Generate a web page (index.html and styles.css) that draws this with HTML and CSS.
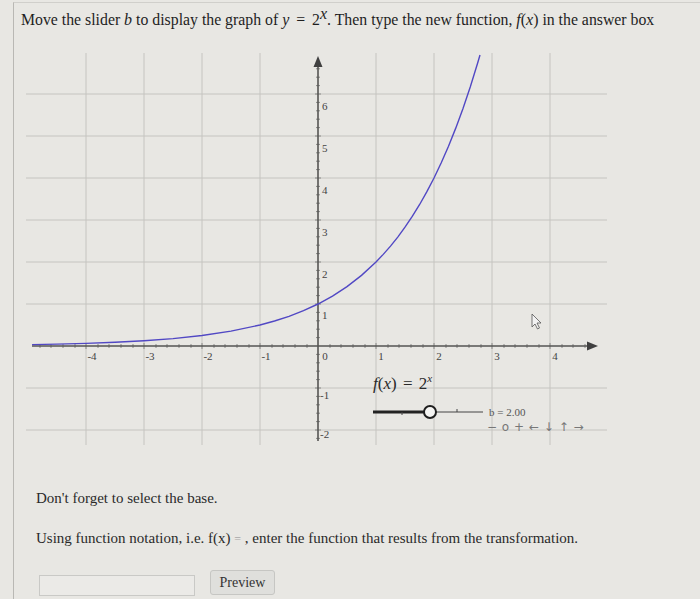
FILE: index.html
```html
<!DOCTYPE html>
<html>
<head>
<meta charset="utf-8">
<link rel="stylesheet" href="styles.css">
</head>
<body>
<div class="panel">
  <p class="title">Move the slider <i class="m">b</i> to display the graph of <i class="m">y</i> <span class="eq">=</span> 2<sup><i class="m">x</i></sup>. Then type the new function, <i class="m">f</i>(<i class="m">x</i>) in the answer box</p>

  <svg class="graph" width="626" height="410" viewBox="14 45 626 410" xmlns="http://www.w3.org/2000/svg">
    <g class="grid">
      <line x1="86" y1="53" x2="86" y2="445"/>
      <line x1="144" y1="53" x2="144" y2="445"/>
      <line x1="202" y1="53" x2="202" y2="445"/>
      <line x1="260" y1="53" x2="260" y2="445"/>
      <line x1="376" y1="53" x2="376" y2="445"/>
      <line x1="434" y1="53" x2="434" y2="445"/>
      <line x1="492" y1="53" x2="492" y2="445"/>
      <line x1="550" y1="53" x2="550" y2="445"/>
      <line x1="26" y1="94" x2="607" y2="94"/>
      <line x1="26" y1="136" x2="607" y2="136"/>
      <line x1="26" y1="178" x2="607" y2="178"/>
      <line x1="26" y1="220" x2="607" y2="220"/>
      <line x1="26" y1="262" x2="607" y2="262"/>
      <line x1="26" y1="304" x2="607" y2="304"/>
      <line x1="26" y1="388" x2="607" y2="388"/>
      <line x1="26" y1="430" x2="607" y2="430"/>
    </g>
    <g class="minor">
      <path d="M40 344v4M51 344v4M63 344v4M75 344v4M98 344v4M109 344v4M121 344v4M133 344v4M156 344v4M167 344v4M179 344v4M191 344v4M214 344v4M225 344v4M237 344v4M249 344v4M272 344v4M283 344v4M295 344v4M307 344v4M330 344v4M341 344v4M353 344v4M365 344v4M388 344v4M399 344v4M411 344v4M423 344v4M446 344v4M457 344v4M469 344v4M481 344v4M504 344v4M515 344v4M527 344v4M539 344v4M562 344v4M573 344v4M585 344v4"/>
      <path d="M316 85.6h4M316 77.2h4M316 68.8h4M316 127.6h4M316 119.2h4M316 110.8h4M316 102.4h4M316 169.6h4M316 161.2h4M316 152.8h4M316 144.4h4M316 211.6h4M316 203.2h4M316 194.8h4M316 186.4h4M316 253.6h4M316 245.2h4M316 236.8h4M316 228.4h4M316 295.6h4M316 287.2h4M316 278.8h4M316 270.4h4M316 337.6h4M316 329.2h4M316 320.8h4M316 312.4h4M316 354.4h4M316 362.8h4M316 371.2h4M316 379.6h4M316 396.4h4M316 404.8h4M316 413.2h4M316 421.6h4M316 438.4h4"/>
      <path d="M86 343v6M144 343v6M202 343v6M260 343v6M376 343v6M434 343v6M492 343v6M550 343v6M315 94h6M315 136h6M315 178h6M315 220h6M315 262h6M315 304h6M315 388h6M315 430h6"/>
    </g>
    <g class="axes">
      <line x1="32" y1="346" x2="590" y2="346"/>
      <line x1="318" y1="441" x2="318" y2="64"/>
    </g>
    <polygon class="arrow" points="598,346 587,341.5 587,350.5"/>
    <polygon class="arrow" points="318,56 313.5,67 322.5,67"/>

    <g class="xlab">
      <text x="92" y="360">-4</text>
      <text x="150" y="360">-3</text>
      <text x="208" y="360">-2</text>
      <text x="266" y="360">-1</text>
      <text x="325" y="360">0</text>
      <text x="381" y="360">1</text>
      <text x="439" y="360">2</text>
      <text x="497" y="360">3</text>
      <text x="555" y="360">4</text>
    </g>
    <g class="ylab">
      <text x="322" y="110">6</text>
      <text x="322" y="152">5</text>
      <text x="322" y="194">4</text>
      <text x="322" y="236">3</text>
      <text x="322" y="278">2</text>
      <text x="322" y="319">1</text>
      <text x="320" y="399">-1</text>
      <text x="320" y="438">-2</text>
    </g>

    <polyline class="curve" points="32.06,344.62 57,344.14 86,343.38 115,342.29 144,340.75 173,338.58 202,335.5 231,331.15 260,325 274.5,321.03 289,316.3 303.5,310.68 318,304 332.5,296.05 347,286.6 361.5,275.36 376,262 383.25,254.4 390.5,246.11 397.75,237.07 405,227.21 412.25,216.46 419.5,204.73 426.75,191.94 434,178 441.25,162.8 448.5,146.21 455.75,128.13 463,108.41 470.25,86.91 477.5,63.45 480,54.94"/>

    <text class="fx" x="373" y="389"><tspan class="it">f</tspan>(<tspan class="it">x</tspan>) <tspan dx="2">=</tspan> <tspan dx="2">2</tspan><tspan class="it sup" dy="-7">x</tspan></text>

    <line class="slider-on" x1="373" y1="412" x2="424" y2="412"/>
    <line class="slider-off" x1="436" y1="412" x2="483" y2="412"/>
    <path class="slider-off" d="M402 412v3M457 409v3"/>
    <circle class="knob" cx="430" cy="412" r="6"/>
    <text class="bval" x="489" y="416">b = 2.00</text>
    <text class="ctrls" x="487" y="431">− o + ← ↓ ↑ →</text>

    <path class="cursor" d="M532 314 L532 327 L535 324 L537.5 329 L539.5 328 L537 323 L541 323 Z"/>
  </svg>

  <p class="note first">Don't forget to select the base.</p>
  <p class="note second">Using function notation, i.e. f(x) <span class="faint">=</span> , enter the function that results from the transformation.</p>

  <div class="answer">
    <div class="input"></div>
    <div class="btn">Preview</div>
  </div>
</div>
</body>
</html>
```

FILE: styles.css
```css
html, body {
  margin: 0;
  padding: 0;
  background: #e8e7e3;
  font-family: "Liberation Serif", "Times New Roman", serif;
  color: #2a2a2a;
  overflow: hidden;
}

.panel {
  margin: 2px 0 0 13px;
  border-left: 1px solid #b9b8b4;
  border-top: 1px solid #d0cfcb;
  height: 600px;
}

.title {
  margin: 0;
  padding: 8px 0 0 7px;
  font-size: 15.8px;
  line-height: 18px;
  color: #1e1e1e;
}

.title .m {
  font-family: "Liberation Serif", serif;
  font-size: 16px;
}

.title sup {
  font-size: 10px;
  line-height: 0;
}

.title .eq {
  padding: 0 3px;
}

.graph {
  display: block;
  margin-top: 16px;
}

.grid line {
  stroke: #c5c4c0;
  stroke-width: 1;
}

.minor path {
  stroke: #8a8a88;
  stroke-width: 1;
}

.axes line {
  stroke: #555553;
  stroke-width: 1.6;
}

.arrow {
  fill: #404040;
}

.xlab text {
  font-family: "Liberation Serif", serif;
  font-size: 11px;
  fill: #444;
  text-anchor: middle;
}

.ylab text {
  font-family: "Liberation Serif", serif;
  font-size: 11px;
  fill: #444;
}

.curve {
  fill: none;
  stroke: #5148c4;
  stroke-width: 1.4;
}

.fx {
  font-family: "Liberation Serif", serif;
  font-size: 17px;
  fill: #2a2a2a;
}

.fx .it {
  font-style: italic;
  font-size: 17px;
}

.fx .sup {
  font-size: 11px;
}

.slider-on {
  stroke: #222;
  stroke-width: 3;
}

.slider-off {
  stroke: #444;
  stroke-width: 1;
  fill: none;
}

.knob {
  fill: #f4f4f2;
  stroke: #1e1e1e;
  stroke-width: 2;
}

.bval {
  font-family: "Liberation Serif", serif;
  font-size: 11px;
  fill: #555;
}

.ctrls {
  font-family: "DejaVu Sans", sans-serif;
  font-size: 12px;
  fill: #777;
  letter-spacing: 0.5px;
}

.cursor {
  fill: #f2f2f2;
  stroke: #555;
  stroke-width: 0.8;
}

.note {
  margin: 0;
  padding-left: 22px;
  font-size: 15px;
  line-height: 18px;
  color: #2a2a2a;
}

.note.first {
  margin-top: 34px;
}

.note.second {
  margin-top: 22px;
}

.faint {
  color: #a8a8a8;
  font-size: 12px;
}

.answer {
  display: flex;
  align-items: flex-start;
  gap: 15px;
  margin-top: 22px;
  padding-left: 25px;
}

.input {
  width: 154px;
  height: 19px;
  margin-top: 5px;
  border: 1px solid #c9c9c6;
  background: #ebeae7;
}

.btn {
  width: 63px;
  height: 23px;
  border: 1px solid #c6c6c3;
  border-radius: 3px;
  background: #dfdfdc;
  font-size: 14px;
  line-height: 23px;
  text-align: center;
  color: #333;
}
```
